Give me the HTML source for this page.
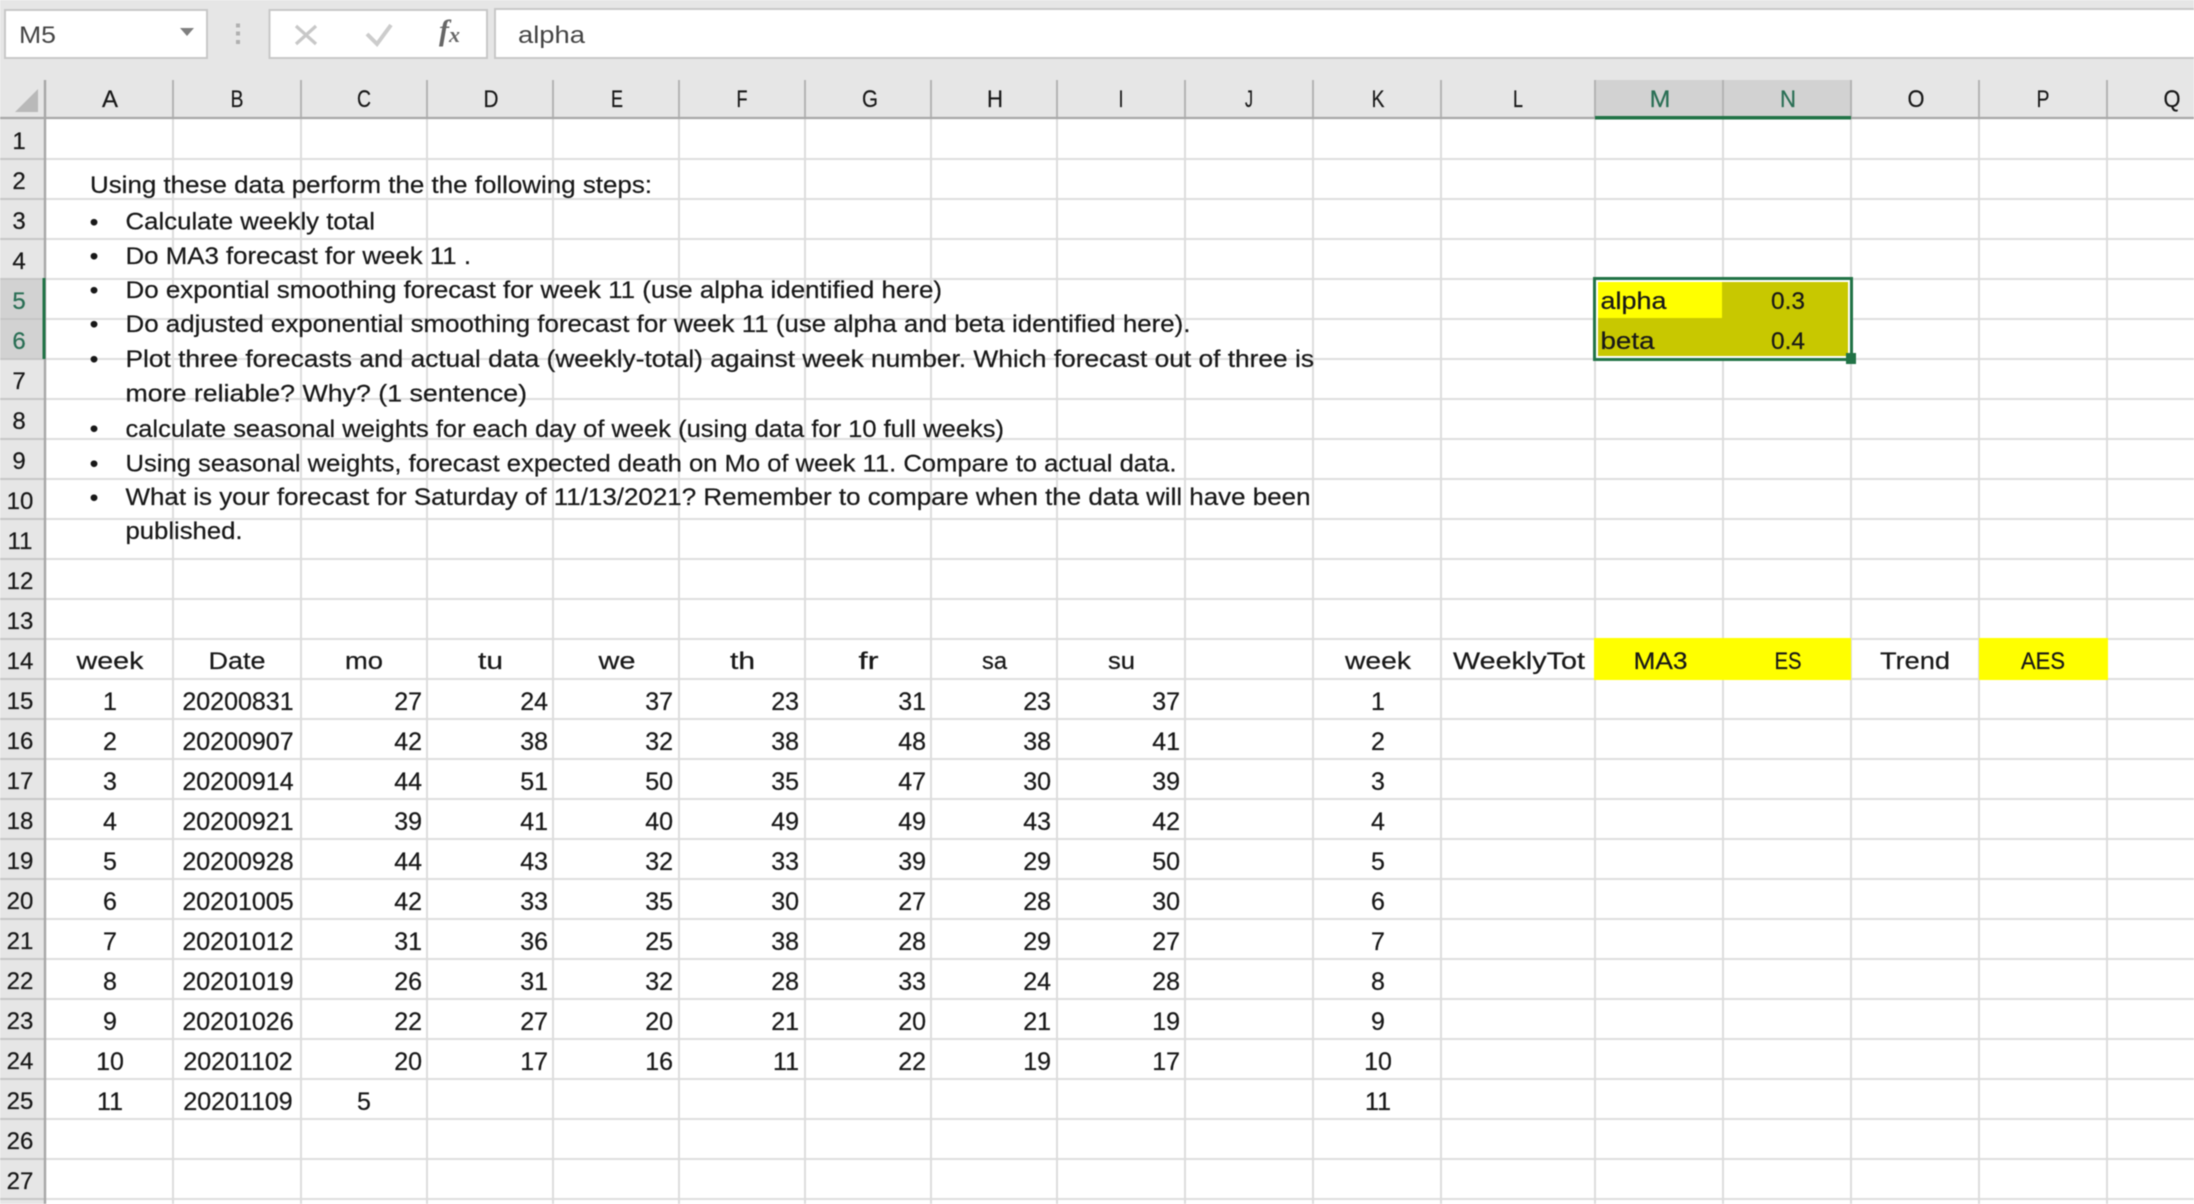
<!DOCTYPE html>
<html><head><meta charset="utf-8"><title>Sheet</title>
<style>
html,body{margin:0;padding:0;background:#fff;width:2194px;height:1204px;overflow:hidden}
svg{display:block;filter:blur(.55px)}
text{font-family:"Liberation Sans",sans-serif;font-size:24.5px;fill:#181818;stroke:#181818;stroke-width:.22px}
.m{text-anchor:middle}
.e{text-anchor:end}
.n{font-size:25px}
.h{font-size:24px}
.g{fill:#2a6f55;stroke:#2a6f55}
.b{fill:#444;stroke:none}
.fx{font-family:"Liberation Serif",serif;font-style:italic;font-weight:bold;fill:#666;stroke:none}
</style></head><body>
<svg width="2194" height="1204" viewBox="0 0 2194 1204" xmlns="http://www.w3.org/2000/svg">
<rect width="2194" height="1204" fill="#fff"/>
<!-- chrome -->
<rect width="2194" height="119" fill="#e6e6e6"/>
<rect x="0" y="119" width="44" height="1085" fill="#e6e6e6"/>
<g fill="#fff" stroke="#c8c8c8" stroke-width="2">
<rect x="5" y="10" width="202" height="48"/>
<rect x="269.500" y="10" width="217.500" height="48"/>
<rect x="495" y="9" width="1710" height="49"/>
</g>
<path d="M180 28H194L187 36Z" fill="#7f7f7f"/>
<g fill="#b0b0b0"><rect x="236" y="23.500" width="4" height="4"/><rect x="236" y="31.500" width="4" height="4"/><rect x="236" y="40" width="4" height="4"/></g>
<path d="M296 26L316 44M316 26L296 44" stroke="#c8c8c8" stroke-width="3.200" fill="none"/>
<path d="M367 34L377 44L391 25" stroke="#cccccc" stroke-width="4" fill="none"/>
<text x="439" y="40" class="fx" style="font-size:30px">f</text>
<text x="449" y="42" class="fx" style="font-size:22px">x</text>
<text x="19" y="43" textLength="37" lengthAdjust="spacingAndGlyphs" class="b">M5</text>
<text x="518" y="43" textLength="67" lengthAdjust="spacingAndGlyphs" class="b">alpha</text>
<!-- selected headers -->
<rect x="1595" y="80" width="256" height="37" fill="#d2d2d2"/>
<rect x="0" y="279" width="43" height="80" fill="#d2d2d2"/>
<path d="M38 89V112H15Z" fill="#b9b9b9"/>
<!-- grid -->
<path d="M173 119V1204M301 119V1204M427 119V1204M553 119V1204M679 119V1204M805 119V1204M931 119V1204M1057 119V1204M1185 119V1204M1313 119V1204M1441 119V1204M1595 119V1204M1723 119V1204M1851 119V1204M1979 119V1204M2107 119V1204" stroke="#dcdcdc" stroke-width="2" fill="none"/>
<path d="M45 159H2194M45 199H2194M45 239H2194M45 279H2194M45 319H2194M45 359H2194M45 399H2194M45 439H2194M45 479H2194M45 519H2194M45 559H2194M45 599H2194M45 639H2194M45 679H2194M45 719H2194M45 759H2194M45 799H2194M45 839H2194M45 879H2194M45 919H2194M45 959H2194M45 999H2194M45 1039H2194M45 1079H2194M45 1119H2194M45 1159H2194M45 1199H2194" stroke="#dedede" stroke-width="2" fill="none"/>
<path d="M0 159H44M0 199H44M0 239H44M0 279H44M0 319H44M0 359H44M0 399H44M0 439H44M0 479H44M0 519H44M0 559H44M0 599H44M0 639H44M0 679H44M0 719H44M0 759H44M0 799H44M0 839H44M0 879H44M0 919H44M0 959H44M0 999H44M0 1039H44M0 1079H44M0 1119H44M0 1159H44M0 1199H44" stroke="#c6c6c6" stroke-width="2" fill="none"/>
<path d="M45 80V117M173 80V117M301 80V117M427 80V117M553 80V117M679 80V117M805 80V117M931 80V117M1057 80V117M1185 80V117M1313 80V117M1441 80V117M1595 80V117M1723 80V117M1851 80V117M1979 80V117M2107 80V117" stroke="#b4b4b4" stroke-width="2" fill="none"/>
<path d="M0 118H2194" stroke="#a8a8a8" stroke-width="2.200" fill="none"/>
<path d="M45 80V1204" stroke="#a8a8a8" stroke-width="2.400" fill="none"/>
<rect x="1595" y="116" width="256" height="3.500" fill="#217346"/>
<rect x="42.500" y="278" width="3" height="81" fill="#217346"/>
<!-- yellow -->
<rect x="1594" y="638" width="257" height="42" fill="#ffff00"/>
<rect x="1979" y="638" width="129" height="42" fill="#ffff00"/>
<!-- selection -->
<rect x="1596" y="280" width="254" height="79" fill="#fff"/>
<rect x="1598" y="282" width="250" height="74" fill="#c8c800"/>
<rect x="1598" y="282" width="124" height="36" fill="#ffff00"/>
<rect x="1594.500" y="278.500" width="257" height="81" fill="none" stroke="#217346" stroke-width="3"/>
<rect x="1846" y="353" width="10" height="11" fill="#217346"/>
<!-- column letters -->
<text x="110" y="107" class="m h" textLength="16" lengthAdjust="spacingAndGlyphs">A</text>
<text x="237" y="107" class="m h" textLength="13" lengthAdjust="spacingAndGlyphs">B</text>
<text x="364" y="107" class="m h" textLength="14" lengthAdjust="spacingAndGlyphs">C</text>
<text x="491" y="107" class="m h" textLength="15" lengthAdjust="spacingAndGlyphs">D</text>
<text x="617" y="107" class="m h" textLength="12" lengthAdjust="spacingAndGlyphs">E</text>
<text x="742" y="107" class="m h" textLength="11" lengthAdjust="spacingAndGlyphs">F</text>
<text x="870" y="107" class="m h" textLength="16" lengthAdjust="spacingAndGlyphs">G</text>
<text x="995" y="107" class="m h" textLength="16" lengthAdjust="spacingAndGlyphs">H</text>
<text x="1121" y="107" class="m h" textLength="5" lengthAdjust="spacingAndGlyphs">I</text>
<text x="1249" y="107" class="m h" textLength="8" lengthAdjust="spacingAndGlyphs">J</text>
<text x="1378" y="107" class="m h" textLength="13" lengthAdjust="spacingAndGlyphs">K</text>
<text x="1518" y="107" class="m h" textLength="10" lengthAdjust="spacingAndGlyphs">L</text>
<text x="1660" y="107" class="m h g" textLength="21" lengthAdjust="spacingAndGlyphs">M</text>
<text x="1788" y="107" class="m h g" textLength="16" lengthAdjust="spacingAndGlyphs">N</text>
<text x="1916" y="107" class="m h" textLength="17" lengthAdjust="spacingAndGlyphs">O</text>
<text x="2043" y="107" class="m h" textLength="13" lengthAdjust="spacingAndGlyphs">P</text>
<text x="2172" y="107" class="m h" textLength="17" lengthAdjust="spacingAndGlyphs">Q</text>
<!-- row numbers -->
<text x="19" y="149" class="m h">1</text><text x="19" y="189" class="m h">2</text><text x="19" y="229" class="m h">3</text><text x="19" y="269" class="m h">4</text>
<text x="19" y="309" class="m h g">5</text><text x="19" y="349" class="m h g">6</text><text x="19" y="389" class="m h">7</text><text x="19" y="429" class="m h">8</text><text x="19" y="469" class="m h">9</text>
<text x="20" y="509" class="m h">10</text><text x="20" y="549" class="m h">11</text><text x="20" y="589" class="m h">12</text><text x="20" y="629" class="m h">13</text><text x="20" y="669" class="m h">14</text><text x="20" y="709" class="m h">15</text><text x="20" y="749" class="m h">16</text><text x="20" y="789" class="m h">17</text><text x="20" y="829" class="m h">18</text><text x="20" y="869" class="m h">19</text><text x="20" y="909" class="m h">20</text><text x="20" y="949" class="m h">21</text><text x="20" y="989" class="m h">22</text><text x="20" y="1029" class="m h">23</text><text x="20" y="1069" class="m h">24</text><text x="20" y="1109" class="m h">25</text><text x="20" y="1149" class="m h">26</text><text x="20" y="1189" class="m h">27</text>
<!-- instructions -->
<text x="90" y="193" textLength="562" lengthAdjust="spacingAndGlyphs">Using these data perform the the following steps:</text>
<text x="94" y="230" class="m">•</text><text x="125.500" y="229.500" textLength="249.500" lengthAdjust="spacingAndGlyphs">Calculate weekly total</text>
<text x="94" y="264" class="m">•</text><text x="125.500" y="264" textLength="345.500" lengthAdjust="spacingAndGlyphs">Do MA3 forecast for week 11 .</text>
<text x="94" y="298" class="m">•</text><text x="125.500" y="298" textLength="816.500" lengthAdjust="spacingAndGlyphs">Do expontial smoothing forecast for week 11 (use alpha identified here)</text>
<text x="94" y="332" class="m">•</text><text x="125.500" y="332" textLength="1065" lengthAdjust="spacingAndGlyphs">Do adjusted exponential smoothing forecast for week 11 (use alpha and beta identified here).</text>
<text x="94" y="367" class="m">•</text><text x="125.500" y="367" textLength="1188.500" lengthAdjust="spacingAndGlyphs">Plot three forecasts and actual data (weekly-total) against week number. Which forecast out of three is</text>
<text x="125.500" y="401.500" textLength="401.500" lengthAdjust="spacingAndGlyphs">more reliable? Why? (1 sentence)</text>
<text x="94" y="436.500" class="m">•</text><text x="125.500" y="437" textLength="878.500" lengthAdjust="spacingAndGlyphs">calculate seasonal weights for each day of week (using data for 10 full weeks)</text>
<text x="94" y="471.500" class="m">•</text><text x="125.500" y="471.500" textLength="1051" lengthAdjust="spacingAndGlyphs">Using seasonal weights, forecast expected death on Mo of week 11. Compare to actual data.</text>
<text x="94" y="505.500" class="m">•</text><text x="125.500" y="505" textLength="1185" lengthAdjust="spacingAndGlyphs">What is your forecast for Saturday of 11/13/2021? Remember to compare when the data will have been</text>
<text x="125.500" y="539" textLength="117" lengthAdjust="spacingAndGlyphs">published.</text>
<!-- alpha/beta -->
<text x="1600.500" y="309" textLength="66" lengthAdjust="spacingAndGlyphs">alpha</text>
<text x="1600.500" y="349" textLength="54" lengthAdjust="spacingAndGlyphs">beta</text>
<text x="1788" y="309" class="m" textLength="34" lengthAdjust="spacingAndGlyphs">0.3</text>
<text x="1788" y="349" class="m" textLength="34" lengthAdjust="spacingAndGlyphs">0.4</text>
<!-- table header -->
<text x="110" y="669" class="m" textLength="67" lengthAdjust="spacingAndGlyphs">week</text>
<text x="237" y="669" class="m" textLength="57" lengthAdjust="spacingAndGlyphs">Date</text>
<text x="364" y="669" class="m" textLength="38" lengthAdjust="spacingAndGlyphs">mo</text>
<text x="490.500" y="669" class="m" textLength="25" lengthAdjust="spacingAndGlyphs">tu</text>
<text x="617" y="669" class="m" textLength="37" lengthAdjust="spacingAndGlyphs">we</text>
<text x="742.500" y="669" class="m" textLength="25" lengthAdjust="spacingAndGlyphs">th</text>
<text x="868.500" y="669" class="m" textLength="20" lengthAdjust="spacingAndGlyphs">fr</text>
<text x="994.500" y="669" class="m" textLength="25" lengthAdjust="spacingAndGlyphs">sa</text>
<text x="1121.500" y="669" class="m" textLength="27" lengthAdjust="spacingAndGlyphs">su</text>
<text x="1378" y="669" class="m" textLength="66" lengthAdjust="spacingAndGlyphs">week</text>
<text x="1453" y="669" textLength="132" lengthAdjust="spacingAndGlyphs">WeeklyTot</text>
<text x="1660.500" y="669" class="m" textLength="54" lengthAdjust="spacingAndGlyphs">MA3</text>
<text x="1788" y="669" class="m" textLength="27" lengthAdjust="spacingAndGlyphs">ES</text>
<text x="1915" y="669" class="m" textLength="70" lengthAdjust="spacingAndGlyphs">Trend</text>
<text x="2043" y="669" class="m" textLength="44" lengthAdjust="spacingAndGlyphs">AES</text>
<!-- week numbers -->
<text x="110" y="710" class="m n">1</text><text x="110" y="750" class="m n">2</text><text x="110" y="790" class="m n">3</text><text x="110" y="830" class="m n">4</text><text x="110" y="870" class="m n">5</text><text x="110" y="910" class="m n">6</text><text x="110" y="950" class="m n">7</text><text x="110" y="990" class="m n">8</text><text x="110" y="1030" class="m n">9</text><text x="110" y="1070" class="m n">10</text><text x="110" y="1110" class="m n">11</text>
<text x="238" y="710" class="m n">20200831</text><text x="238" y="750" class="m n">20200907</text><text x="238" y="790" class="m n">20200914</text><text x="238" y="830" class="m n">20200921</text><text x="238" y="870" class="m n">20200928</text><text x="238" y="910" class="m n">20201005</text><text x="238" y="950" class="m n">20201012</text><text x="238" y="990" class="m n">20201019</text><text x="238" y="1030" class="m n">20201026</text><text x="238" y="1070" class="m n">20201102</text><text x="238" y="1110" class="m n">20201109</text>
<text x="364" y="1110" class="m n">5</text>
<text x="1378" y="710" class="m n">1</text><text x="1378" y="750" class="m n">2</text><text x="1378" y="790" class="m n">3</text><text x="1378" y="830" class="m n">4</text><text x="1378" y="870" class="m n">5</text><text x="1378" y="910" class="m n">6</text><text x="1378" y="950" class="m n">7</text><text x="1378" y="990" class="m n">8</text><text x="1378" y="1030" class="m n">9</text><text x="1378" y="1070" class="m n">10</text><text x="1378" y="1110" class="m n">11</text>
<!-- values -->
<text x="422" y="710" class="e n">27</text><text x="548" y="710" class="e n">24</text><text x="673" y="710" class="e n">37</text><text x="799" y="710" class="e n">23</text><text x="926" y="710" class="e n">31</text><text x="1051" y="710" class="e n">23</text><text x="1180" y="710" class="e n">37</text>
<text x="422" y="750" class="e n">42</text><text x="548" y="750" class="e n">38</text><text x="673" y="750" class="e n">32</text><text x="799" y="750" class="e n">38</text><text x="926" y="750" class="e n">48</text><text x="1051" y="750" class="e n">38</text><text x="1180" y="750" class="e n">41</text>
<text x="422" y="790" class="e n">44</text><text x="548" y="790" class="e n">51</text><text x="673" y="790" class="e n">50</text><text x="799" y="790" class="e n">35</text><text x="926" y="790" class="e n">47</text><text x="1051" y="790" class="e n">30</text><text x="1180" y="790" class="e n">39</text>
<text x="422" y="830" class="e n">39</text><text x="548" y="830" class="e n">41</text><text x="673" y="830" class="e n">40</text><text x="799" y="830" class="e n">49</text><text x="926" y="830" class="e n">49</text><text x="1051" y="830" class="e n">43</text><text x="1180" y="830" class="e n">42</text>
<text x="422" y="870" class="e n">44</text><text x="548" y="870" class="e n">43</text><text x="673" y="870" class="e n">32</text><text x="799" y="870" class="e n">33</text><text x="926" y="870" class="e n">39</text><text x="1051" y="870" class="e n">29</text><text x="1180" y="870" class="e n">50</text>
<text x="422" y="910" class="e n">42</text><text x="548" y="910" class="e n">33</text><text x="673" y="910" class="e n">35</text><text x="799" y="910" class="e n">30</text><text x="926" y="910" class="e n">27</text><text x="1051" y="910" class="e n">28</text><text x="1180" y="910" class="e n">30</text>
<text x="422" y="950" class="e n">31</text><text x="548" y="950" class="e n">36</text><text x="673" y="950" class="e n">25</text><text x="799" y="950" class="e n">38</text><text x="926" y="950" class="e n">28</text><text x="1051" y="950" class="e n">29</text><text x="1180" y="950" class="e n">27</text>
<text x="422" y="990" class="e n">26</text><text x="548" y="990" class="e n">31</text><text x="673" y="990" class="e n">32</text><text x="799" y="990" class="e n">28</text><text x="926" y="990" class="e n">33</text><text x="1051" y="990" class="e n">24</text><text x="1180" y="990" class="e n">28</text>
<text x="422" y="1030" class="e n">22</text><text x="548" y="1030" class="e n">27</text><text x="673" y="1030" class="e n">20</text><text x="799" y="1030" class="e n">21</text><text x="926" y="1030" class="e n">20</text><text x="1051" y="1030" class="e n">21</text><text x="1180" y="1030" class="e n">19</text>
<text x="422" y="1070" class="e n">20</text><text x="548" y="1070" class="e n">17</text><text x="673" y="1070" class="e n">16</text><text x="799" y="1070" class="e n">11</text><text x="926" y="1070" class="e n">22</text><text x="1051" y="1070" class="e n">19</text><text x="1180" y="1070" class="e n">17</text>
</svg>
</body></html>
